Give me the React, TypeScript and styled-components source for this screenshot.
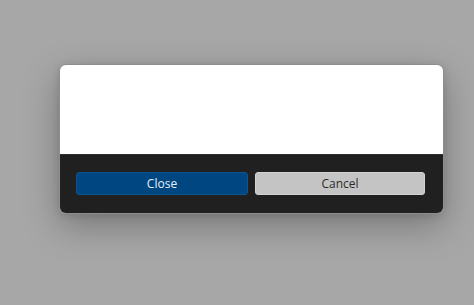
import styled, { createGlobalStyle } from 'styled-components';

const GlobalStyle = createGlobalStyle`
  html, body {
    margin: 0;
    padding: 0;
    background: #a7a7a7;
  }
  body {
    font-family: 'Open Sans', 'Noto Sans', sans-serif;
  }
`;

const Backdrop = styled.div`
  width: 474px;
  height: 305px;
  padding: 64px 0 0 59px;
  box-sizing: border-box;
  background: #a7a7a7;
`;

const Dialog = styled.div`
  width: 385px;
  border-radius: 7px;
  overflow: hidden;
  border: 1px solid #8e8e8e;
  box-sizing: border-box;
  box-shadow: 0 12px 36px rgba(0, 0, 0, 0.28), 0 2px 8px rgba(0, 0, 0, 0.12);
  display: flex;
  flex-direction: column;
`;

const Content = styled.div`
  height: 89px;
  background: #ffffff;
`;

const Footer = styled.div`
  background: #202020;
  border-top: 1px solid #2e2e2e;
  padding: 17px 18px 18px 16px;
  display: grid;
  grid-template-columns: 172px 1fr;
  gap: 7px;
`;

const Button = styled.button<{ $primary?: boolean }>`
  height: 23px;
  border-radius: 3px;
  font-family: 'Open Sans', 'Noto Sans', sans-serif;
  font-size: 12px;
  padding: 0;
  cursor: pointer;
  background: ${(p) => (p.$primary ? '#004781' : '#c4c4c4')};
  color: ${(p) => (p.$primary ? '#e6eef7' : '#2a2a2a')};
  border: 1px solid ${(p) => (p.$primary ? '#0d548f' : '#d2d2d2')};
`;

export default function App() {
  return (
    <>
      <GlobalStyle />
      <Backdrop>
        <Dialog>
          <Content />
          <Footer>
            <Button $primary>Close</Button>
            <Button>Cancel</Button>
          </Footer>
        </Dialog>
      </Backdrop>
    </>
  );
}
